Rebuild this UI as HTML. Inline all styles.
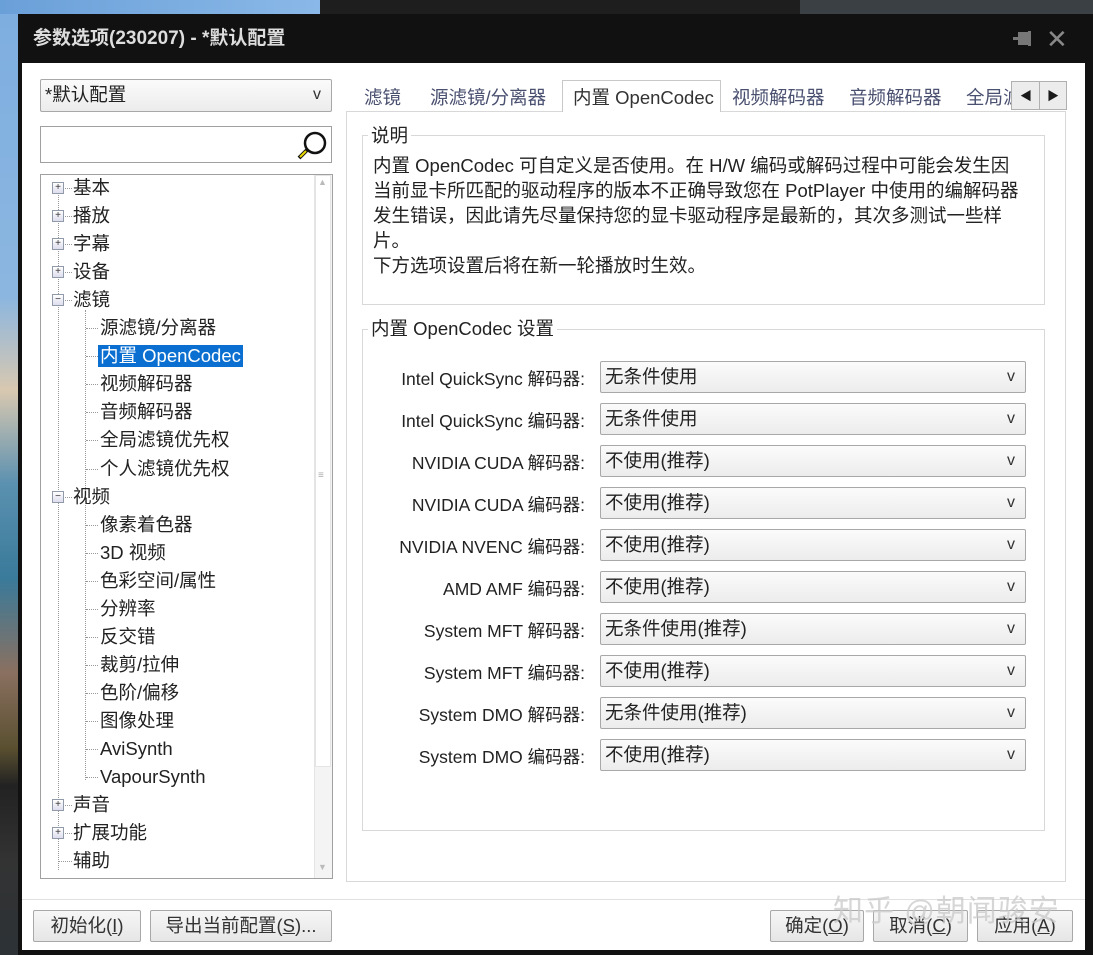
<!DOCTYPE html>
<html><head><meta charset="utf-8"><style>
*{margin:0;padding:0;box-sizing:border-box}
body{width:1093px;height:955px;overflow:hidden;position:relative;background:#2a2f33;font-family:"Liberation Sans","Noto Sans CJK SC",sans-serif;color:#1a1a1a}
.a{position:absolute}
.t{font-size:18.5px;white-space:nowrap;line-height:22px;color:#222}
.combo{position:absolute;border:1px solid #a8a8a8;border-radius:2px;background:linear-gradient(#fbfbfb,#ececec);font-size:18.5px;line-height:30px;padding-left:4px;white-space:nowrap;color:#222}
.combo .v{position:absolute;right:10px;top:0;font-size:16px;color:#333}
.grp{position:absolute;border:1px solid #d8d8d8}
.lg{position:absolute;background:#fff;padding:0 3px;font-size:18.5px;line-height:22px;color:#222}
.tab{position:absolute;top:84px;font-size:18.5px;color:#4a5070;white-space:nowrap}
.btn{position:absolute;top:910px;height:32px;border:1px solid #a8a8a8;border-radius:2px;background:linear-gradient(#f6f6f6,#e6e6e6);font-size:18.5px;line-height:30px;text-align:center;color:#333}
.pm{position:absolute;width:12px;height:12px;border:1px solid #919aa8;background:linear-gradient(#fff,#dde);font-size:10px;line-height:10px;text-align:center;color:#333}
.lab{position:absolute;right:508px;font-size:17.5px;white-space:nowrap;color:#222}
</style></head><body>
<div class="a" style="left:0;top:0;width:320px;height:14px;background:linear-gradient(90deg,#6aa0d8,#8ab8e8)"></div>
<div class="a" style="left:320px;top:0;width:480px;height:14px;background:#1e1e1e"></div>
<div class="a" style="left:800px;top:0;width:293px;height:14px;background:#3a4044"></div>
<div class="a" style="left:0;top:14px;width:18px;height:941px;background:linear-gradient(#7eaee0 0%,#8bb6e0 30%,#d8c8b0 40%,#5a90b0 50%,#3a7a9a 60%,#8a7060 70%,#5a5030 78%,#222 82%,#333 90%,#2c3236 100%)"></div>
<div class="a" style="left:18px;top:14px;width:1075px;height:941px;background:#111"></div>
<div class="a t" style="left:33px;top:28px;color:#ddd;font-size:19px;font-weight:bold">参数选项(230207) - *默认配置</div>
<svg class="a" style="left:1012px;top:29px" width="22" height="20"><rect x="6" y="3" width="10" height="13" fill="#777"/><rect x="1" y="8" width="5" height="3" fill="#777"/><rect x="16" y="2" width="3" height="15" fill="#777"/></svg>
<div class="a" style="left:1046px;top:24px;color:#888;font-size:26px">✕</div>
<div class="a" style="left:22px;top:63px;width:1063px;height:887px;background:#fff"></div>

<div class="combo" style="left:40px;top:79px;width:292px;height:33px">*默认配置<span class="v">v</span></div>
<div class="a" style="left:40px;top:126px;width:292px;height:37px;border:1px solid #a0a0a0"></div>
<svg class="a" style="left:296px;top:130px" width="32" height="32"><circle cx="19" cy="13" r="10" fill="#fff" stroke="#111" stroke-width="2.5"/><line x1="11" y1="20" x2="3" y2="28" stroke="#111" stroke-width="4"/><line x1="10" y1="21" x2="4" y2="27" stroke="#e8d800" stroke-width="2"/></svg>

<div class="a" style="left:40px;top:174px;width:293px;height:705px;border:1px solid #a0a0a0"></div>
<div class="a" style="left:314px;top:175px;width:18px;height:703px;background:#f4f4f4;border-left:1px solid #e4e4e4"></div>
<div class="a" style="left:315px;top:175px;width:16px;height:592px;background:#fff;border:1px solid #e4e4e4"></div>
<div class="a" style="left:318px;top:177px;font-size:9px;color:#bbb">▲</div>
<div class="a" style="left:318px;top:862px;font-size:9px;color:#bbb">▼</div>
<div class="a" style="left:318px;top:470px;font-size:10px;color:#aaa">≡</div>
<div class="a" style="left:58px;top:190px;height:680px;border-left:1px dotted #999"></div>
<div class="a" style="left:85px;top:310px;height:470px;border-left:1px dotted #999"></div>
<div id="tree"></div>

<div class="tab" style="left:364px">滤镜</div>
<div class="tab" style="left:430px">源滤镜/分离器</div>
<div class="a" style="left:562px;top:80px;width:159px;height:32px;border:1px solid #c8c8c8;border-bottom:none;background:#fff;z-index:2"></div>
<div class="tab" style="left:573px;z-index:3;color:#333">内置 OpenCodec</div>
<div class="tab" style="left:732px">视频解码器</div>
<div class="tab" style="left:849px">音频解码器</div>
<div class="tab" style="left:966px;width:45px;overflow:hidden">全局滤镜</div>
<div class="a" style="left:1011px;top:81px;width:56px;height:29px;border:1px solid #b0b0b0;background:#ececec"></div>
<div class="a" style="left:1039px;top:81px;width:1px;height:29px;background:#b0b0b0"></div>
<div class="a" style="left:1020px;top:87px;font-size:12px">◀</div>
<div class="a" style="left:1047px;top:87px;font-size:12px">▶</div>
<div class="a" style="left:346px;top:111px;width:720px;height:771px;border:1px solid #d8d8d8"></div>

<div class="grp" style="left:362px;top:135px;width:683px;height:170px"></div>
<div class="lg" style="left:368px;top:125px">说明</div>
<div class="a t" style="left:373px;top:153px;line-height:25px;font-size:18.5px">内置 OpenCodec 可自定义是否使用。在 H/W 编码或解码过程中可能会发生因<br>当前显卡所匹配的驱动程序的版本不正确导致您在 PotPlayer 中使用的编解码器<br>发生错误，因此请先尽量保持您的显卡驱动程序是最新的，其次多测试一些样<br>片。<br>下方选项设置后将在新一轮播放时生效。</div>

<div class="grp" style="left:362px;top:329px;width:683px;height:502px"></div>
<div class="lg" style="left:368px;top:318px">内置 OpenCodec 设置</div>
<div id="rows"></div>

<div class="a" style="left:22px;top:899px;width:1063px;height:1px;background:#e0e0e0"></div>
<div class="btn" style="left:33px;width:108px">初始化(<u>I</u>)</div>
<div class="btn" style="left:150px;width:182px">导出当前配置(<u>S</u>)...</div>
<div class="btn" style="left:770px;width:94px">确定(<u>O</u>)</div>
<div class="btn" style="left:873px;width:95px">取消(<u>C</u>)</div>
<div class="btn" style="left:977px;width:96px">应用(<u>A</u>)</div>
<div class="a" style="left:833px;top:886px;font-size:30px;color:rgba(200,200,200,.75);white-space:nowrap;letter-spacing:1px">知乎 @朝闻骏安</div>

<script>
var tree=[["基本",0,"+"],["播放",0,"+"],["字幕",0,"+"],["设备",0,"+"],["滤镜",0,"-"],["源滤镜/分离器",1],["内置 OpenCodec",1,null,1],["视频解码器",1],["音频解码器",1],["全局滤镜优先权",1],["个人滤镜优先权",1],["视频",0,"-"],["像素着色器",1],["3D 视频",1],["色彩空间/属性",1],["分辨率",1],["反交错",1],["裁剪/拉伸",1],["色阶/偏移",1],["图像处理",1],["AviSynth",1],["VapourSynth",1],["声音",0,"+"],["扩展功能",0,"+"],["辅助",0]];
var h="";tree.forEach(function(r,i){var y=188+i*28.05;var x=r[1]?100:73;
h+='<div class="a" style="left:'+(r[1]?86:59)+'px;top:'+y+'px;width:'+(r[1]?12:13)+'px;border-top:1px dotted #999"></div>';
if(r[2])h+='<div class="pm" style="left:52px;top:'+(y-6)+'px">'+(r[2]=="+"?"+":"−")+'</div>';
h+='<div class="a t" style="left:'+x+'px;top:'+(y-11)+'px;'+(r[3]?'background:#0a6fd0;color:#fff;padding:0 2px;left:'+(x-2)+'px':'')+'">'+r[0]+'</div>';});
document.getElementById("tree").innerHTML=h;
var rows=[["Intel QuickSync 解码器:","无条件使用"],["Intel QuickSync 编码器:","无条件使用"],["NVIDIA CUDA 解码器:","不使用(推荐)"],["NVIDIA CUDA 编码器:","不使用(推荐)"],["NVIDIA NVENC 编码器:","不使用(推荐)"],["AMD AMF 编码器:","不使用(推荐)"],["System MFT 解码器:","无条件使用(推荐)"],["System MFT 编码器:","不使用(推荐)"],["System DMO 解码器:","无条件使用(推荐)"],["System DMO 编码器:","不使用(推荐)"]];
h="";rows.forEach(function(r,i){var y=361+i*42;h+='<div class="lab" style="top:'+(y+5)+'px">'+r[0]+'</div><div class="combo" style="left:600px;top:'+y+'px;width:426px;height:32px">'+r[1]+'<span class="v">v</span></div>';});
document.getElementById("rows").innerHTML=h;
</script>
</body></html>
